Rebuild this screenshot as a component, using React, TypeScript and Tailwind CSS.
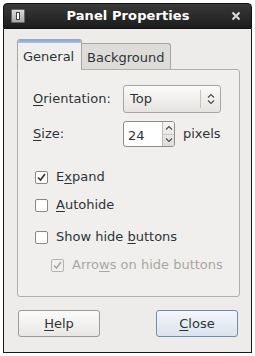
import React from "react";

const font = { fontFamily: '"DejaVu Sans", "Liberation Sans", sans-serif' };

function U({ children }: { children: React.ReactNode }) {
  return <span className="underline underline-offset-2 decoration-1">{children}</span>;
}

function Check({ checked, disabled }: { checked?: boolean; disabled?: boolean }) {
  return (
    <div
      className={`w-[13px] h-[13px] rounded-[2px] border flex items-center justify-center ${
        disabled ? "border-[#b5b3b0] bg-[#f2f1f0]" : "border-[#8a8884] bg-white"
      }`}
    >
      {checked && (
        <svg width="11" height="11" viewBox="0 0 11 11">
          <path
            d="M2 5.5 L4.5 8 L9 2"
            fill="none"
            stroke={disabled ? "#a9a7a4" : "#2e2e2e"}
            strokeWidth="1.6"
          />
        </svg>
      )}
    </div>
  );
}

export default function App() {
  return (
    <div className="w-[255px] h-[356px] bg-white text-[13px] text-[#2e3436]" style={font}>
      <div className="absolute left-[3px] top-[3px] w-[249px] h-[350px] flex flex-col">
        {/* title bar */}
        <div className="h-[26px] rounded-t-[4px] bg-gradient-to-b from-[#3a3a3a] to-[#1c1c1c] border border-[#111] flex items-center px-[7px] relative">
          <div className="w-[14px] h-[14px] rounded-[1px] bg-gradient-to-b from-[#dcdcdc] to-[#a8a8a8] border border-[#666] flex items-center justify-center">
            <div className="w-[4px] h-[8px] bg-white border border-[#444]" />
          </div>
          <div className="flex-1 text-center text-white font-bold text-[13px] tracking-[0.1px]">
            Panel Properties
          </div>
          <svg width="10" height="10" viewBox="0 0 10 10" className="mr-[3px]">
            <path d="M1.5 1.5 L8.5 8.5 M8.5 1.5 L1.5 8.5" stroke="#d8d8d8" strokeWidth="2.2" />
          </svg>
        </div>
        {/* body */}
        <div className="flex-1 bg-[#edeceb] border-x border-b border-[#1a1a1a] px-[13px] pt-[10px]">
          {/* tabs */}
          <div className="flex items-end h-[31px] relative z-10">
            <div className="w-[65px] h-[31px] border border-[#a8a6a2] border-b-0 rounded-t-[3px] bg-[#f0efee] relative overflow-hidden">
              <div className="h-[3px] bg-gradient-to-b from-[#80a8d8] to-[#a9c4e6]" />
              <div className="pl-[5px] pt-[4px] text-[#2e3436]">General</div>
            </div>
            <div className="w-[89px] h-[26px] border border-[#a8a6a2] border-b-0 border-l-0 rounded-tr-[3px] bg-[#dedcd9] pl-[5px] pt-[4px] mb-[1px]">
              Background
            </div>
          </div>
          {/* panel */}
          <div className="-mt-[1px] w-[223px] h-[228px] border border-[#b1afab] rounded-b-[3px] rounded-tr-[3px] bg-[#f0efee] px-[15px] pt-[15px]">
            <div className="flex items-center h-[28px]">
              <div className="w-[90px]">
                <U>O</U>rientation:
              </div>
              <div className="w-[98px] h-[28px] rounded-[3px] border border-[#a7a5a1] bg-gradient-to-b from-[#fafafa] to-[#e6e4e1] flex items-center">
                <div className="flex-1 pl-[6px]">Top</div>
                <div className="w-px h-[18px] bg-[#c5c3bf]" />
                <div className="w-[19px] flex justify-center">
                  <svg width="8" height="12" viewBox="0 0 8 12">
                    <path d="M1 4.5 L4 1.5 L7 4.5 M1 7.5 L4 10.5 L7 7.5" fill="none" stroke="#4a4a4a" strokeWidth="1.1" />
                  </svg>
                </div>
              </div>
            </div>
            <div className="flex items-center h-[26px] mt-[8px]">
              <div className="w-[90px]">
                <U>S</U>ize:
              </div>
              <div className="w-[52px] h-[26px] rounded-[3px] border border-[#8f8d89] bg-white flex overflow-hidden">
                <div className="flex-1 pl-[4px] pt-[4px]">24</div>
                <div className="w-[12px] border-l border-[#bbb9b5] bg-gradient-to-b from-[#f6f5f4] to-[#dedcd9] flex flex-col">
                  <div className="flex-1 flex items-center justify-center border-b border-[#c8c6c2]">
                    <svg width="8" height="6" viewBox="0 0 8 6">
                      <path d="M1 4.5 L4 1.5 L7 4.5" fill="none" stroke="#4a4a4a" strokeWidth="1.1" />
                    </svg>
                  </div>
                  <div className="flex-1 flex items-center justify-center">
                    <svg width="8" height="6" viewBox="0 0 8 6">
                      <path d="M1 1.5 L4 4.5 L7 1.5" fill="none" stroke="#4a4a4a" strokeWidth="1.1" />
                    </svg>
                  </div>
                </div>
              </div>
              <div className="ml-[8px]">pixels</div>
            </div>
            <div className="flex items-center h-[20px] gap-[8px] mt-[20px] pl-[2px]">
              <Check checked />
              <div>
                E<U>x</U>pand
              </div>
            </div>
            <div className="flex items-center h-[20px] gap-[8px] mt-[8px] pl-[2px]">
              <Check />
              <div>
                <U>A</U>utohide
              </div>
            </div>
            <div className="flex items-center h-[20px] gap-[8px] mt-[12px] pl-[2px]">
              <Check />
              <div>
                Show hide <U>b</U>uttons
              </div>
            </div>
            <div className="flex items-center h-[20px] gap-[8px] mt-[8px] pl-[18px] text-[#a9a7a3]">
              <Check checked disabled />
              <div>
                Arro<U>w</U>s on hide buttons
              </div>
            </div>
          </div>
          {/* buttons */}
          <div className="w-[223px] flex justify-between mt-[13px] pl-[1px] pr-[2px]">
            <div className="w-[82px] h-[27px] rounded-[3px] border border-[#9d9b97] bg-gradient-to-b from-[#fbfbfb] to-[#e9e7e4] flex items-center justify-center">
              <span>
                <U>H</U>elp
              </span>
            </div>
            <div className="w-[82px] h-[27px] rounded-[3px] border border-[#6d8db3] bg-gradient-to-b from-[#f3f6fa] to-[#dbe3ed] flex items-center justify-center">
              <span>
                <U>C</U>lose
              </span>
            </div>
          </div>
        </div>
      </div>
    </div>
  );
}
